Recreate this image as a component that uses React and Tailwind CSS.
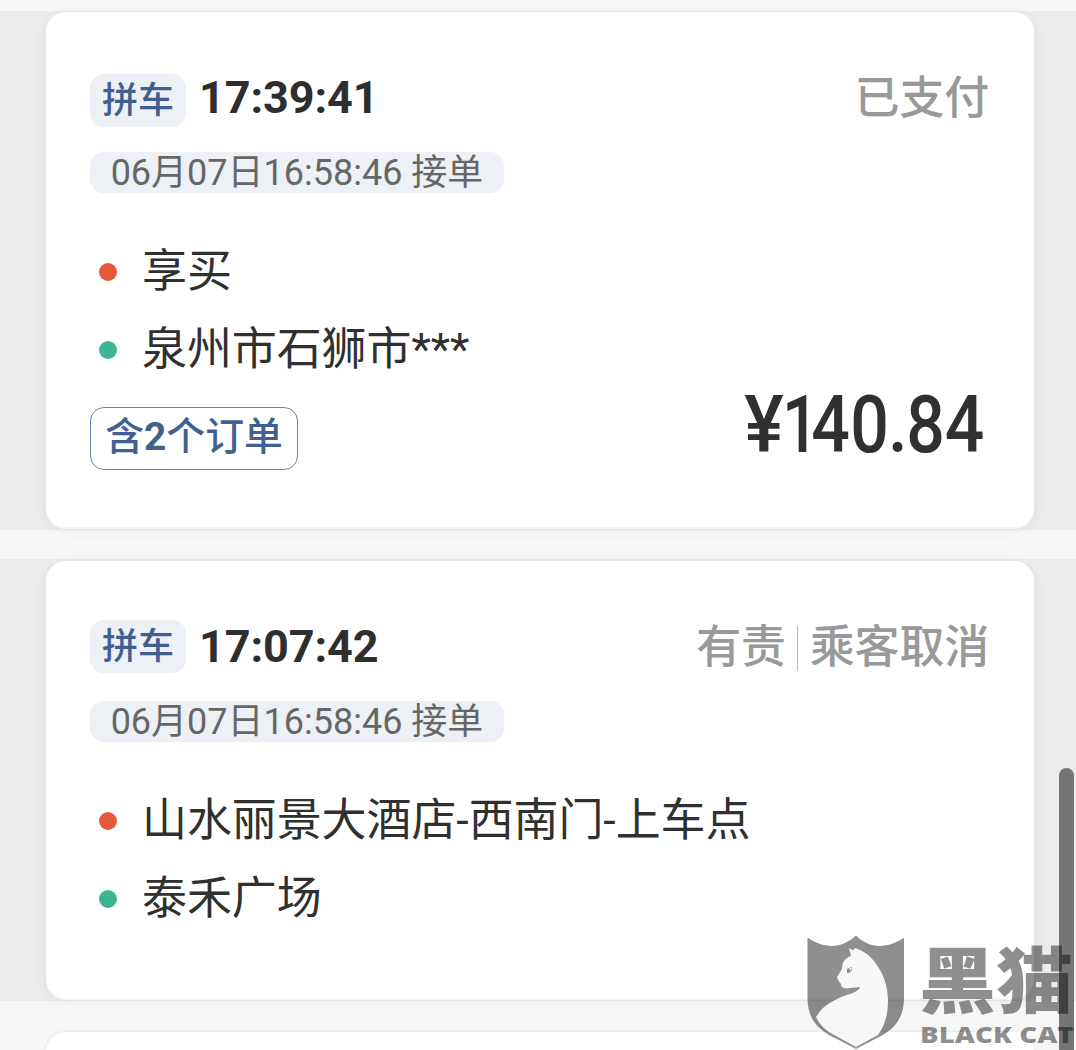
import React from "react";

const PRICE = [
  { ch: "¥", box: "w-[43px]", glyph: "scale-x-[0.94]" },
  { ch: "1", box: "w-[25px]", glyph: "translate-x-[3px] scale-x-[0.82]" },
  { ch: "4", box: "w-[40px]", glyph: "scale-x-[0.86]" },
  { ch: "0", box: "w-[38px]", glyph: "scale-x-[0.86]" },
  { ch: ".", box: "w-[18px]", glyph: "translate-x-px scale-x-[0.9]" },
  { ch: "8", box: "w-[39px]", glyph: "scale-x-[0.86]" },
  { ch: "4", box: "w-[39px]", glyph: "scale-x-[0.88]" },
];

function Price() {
  return (
    <div className="flex h-[80px] text-[79px] font-medium leading-[80px] text-[#303030]">
      {PRICE.map((p, i) => (
        <span key={i} className={`flex justify-center ${p.box}`}>
          <span className={`inline-block ${p.glyph}`}>{p.ch}</span>
        </span>
      ))}
    </div>
  );
}

function Stop({ color, children }) {
  return (
    <div className="flex h-[78px] items-center pl-[9px]">
      <span className={`h-[18px] w-[18px] shrink-0 rounded-full ${color}`} />
      <span className="ml-[25px] whitespace-nowrap text-[45px] leading-[60px] tracking-[-0.1px] text-[#303030]">
        {children}
      </span>
    </div>
  );
}

function Card({ time, status, stops, height, tagShift, children }) {
  return (
    <article
      className={`ml-[46px] w-[988px] rounded-[20px] bg-white pl-11 pr-[45px] pt-[62px] shadow-[0_2px_0_#f5f5f5,0_3px_14px_rgba(0,0,0,0.07)] ${height}`}
    >
      <header className="flex h-[53px] items-center justify-between">
        <div className="flex items-center">
          <span
            className={`flex h-[53px] w-[96px] justify-center rounded-[14px] bg-[#edf1f5] text-[36px] font-medium leading-[55px] text-[#42608f] ${tagShift}`}
          >
            拼车
          </span>
          <span className="ml-[13px] -mt-[6px] text-[45px] font-bold leading-[53px] tracking-[-0.1px] text-[#2e2e2e]">{time}</span>
        </div>
        <div className="-mt-[5px] flex items-center text-[45px] font-medium leading-[53px] tracking-[-0.2px] text-[#999]">{status}</div>
      </header>
      <div className="mt-[25px] flex h-[41px] w-[414px] justify-center whitespace-pre rounded-[14px] bg-[#edf1f5] text-[36px] leading-[43px] text-[#666]">
        06月07日16:58:46 接单
      </div>
      <div className="mt-[40px]">
        <Stop color="bg-[#e4593a]">{stops[0]}</Stop>
        <Stop color="bg-[#3bb594]">{stops[1]}</Stop>
      </div>
      {children}
    </article>
  );
}

function Watermark() {
  return (
    <div className="absolute left-[807px] top-[934px] flex h-[116px] w-[269px] overflow-hidden">
      <svg viewBox="0 0 97 116" className="h-[116px] w-[97px] shrink-0">
        <path
          d="M.5 3.5C17 15 35 15 49 1.500C62 15 81 15 97 3.500V64C97 87 84 98 68 105L49 115L30 105C13 97 .5 87 .5 64Z"
          fill="#000"
          fillOpacity=".44"
        />
        <path
          d="M42 14L46 16.500L48 14C66 19 81 42 81 66C81 81 78 91 71 101L49 113L29 102C19 97 13 91 9 83C16 70 32 63 46 59C50 57 53 55 53 53L39 54.500C35 54 34 52 34 50L31 46L30 43L35 35C35 28 38 24 44 22Z"
          fill="#fff"
          fillOpacity=".94"
        />
        <path d="M40 35L45 33V36L42 39H40Z" fill="#8e8e8e" />
        <circle cx="43.500" cy="35" r="1.100" fill="#fff" />
      </svg>
      <div className="ml-[15px] shrink-0 whitespace-nowrap text-black/44">
        <div className="mt-[8px] h-[80px] origin-center scale-y-[0.93] text-[77px] font-black leading-[82px]">黑猫</div>
        <div className="ml-px h-[24px] w-[130px] origin-left scale-x-[1.26] font-['Open_Sans'] text-[22px] font-extrabold leading-[24px]">
          BLACK CAT
        </div>
      </div>
    </div>
  );
}

export default function App() {
  return (
    <main className="relative h-[1050px] w-[1076px] overflow-hidden bg-[#f7f7f7] pt-[11px] font-[Roboto,'Noto_Sans_CJK_SC',sans-serif]">
      <section className="h-[519px] bg-[#ececec] pt-px">
        <Card time="17:39:41" status="已支付" stops={["享买", "泉州市石狮市***"]} height="h-[515px]" tagShift="">
          <footer className="flex justify-between pt-[18px]">
            <div className="flex h-[63px] w-[208px] justify-center rounded-[14px] border border-[#6c83aa] text-[38.8px] font-medium leading-[57px] text-[#42608f]">
              <span>含<b>2</b>个订单</span>
            </div>
            <div className="-mt-[22px] mr-[5px]">
              <Price />
            </div>
          </footer>
        </Card>
      </section>
      <section className="mt-[29px] h-[442px] bg-[#ececec] pt-[2px]">
        <Card
          time="17:07:42"
          status={
            <>
              有责
              <i className="ml-[11px] mr-[12px] mt-[2px] h-[45px] w-px bg-[#b5b5b5]" />
              乘客取消
            </>
          }
          stops={["山水丽景大酒店-西南门-上车点", "泰禾广场"]}
          height="h-[437px]"
          tagShift="-mt-[6px]"
        />
      </section>
      <section className="pt-[31px]">
        <div className="ml-[46px] h-[60px] w-[988px] rounded-[20px] bg-white shadow-[0_0_3px_rgba(0,0,0,0.12)]" />
      </section>
      <div className="absolute left-[1059px] top-[768px] h-[300px] w-[15px] rounded-full bg-[#757575]" />
      <Watermark />
    </main>
  );
}
